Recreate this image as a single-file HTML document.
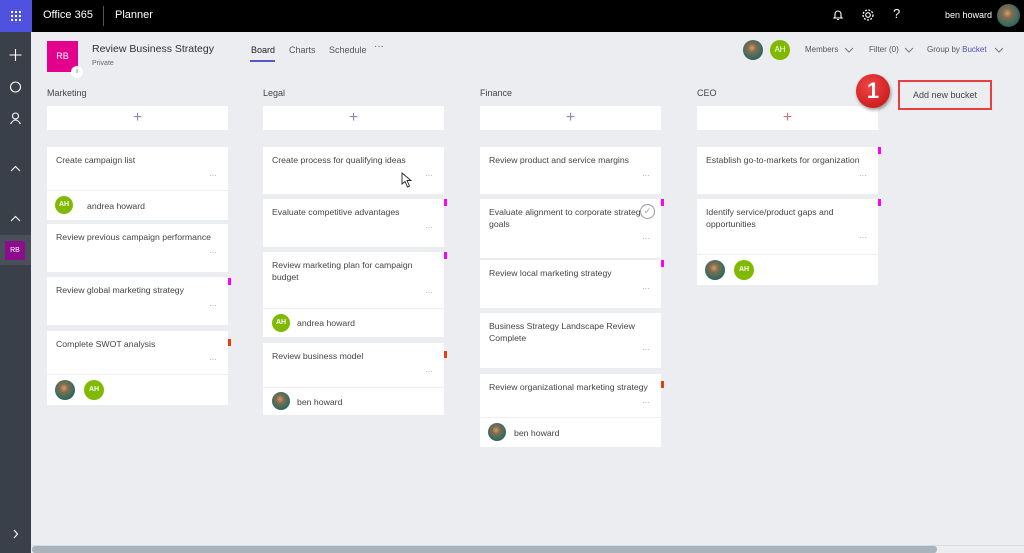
<!DOCTYPE html>
<html><head><meta charset="utf-8">
<style>
*{box-sizing:border-box;margin:0;padding:0}
body{width:1024px;height:553px;overflow:hidden;background:#ecedf1;font-family:"Segoe UI","Liberation Sans",sans-serif;color:#333;position:relative}
.abs{position:absolute}
.top{left:0;top:0;width:1024px;height:32px;background:#000;color:#fff}
.waffle{left:0;top:0;width:32px;height:32px;background:#4f52e0}
.side{left:0;top:32px;width:31px;height:521px;background:#3a4049}
.card{position:absolute;background:#fff;width:181px}
.t{position:absolute;left:9px;top:7px;font-size:8.7px;color:#444;line-height:12px;width:165px}
.dots{position:absolute;right:11px;font-size:8px;color:#999}
.div{position:absolute;left:0;width:181px;height:1px;background:#eee}
.ah{position:absolute;width:18px;height:18px;border-radius:50%;background:#7fba00;color:#fff;font-size:7px;text-align:center;line-height:18px;font-weight:bold}
.ph{position:absolute;width:20px;height:20px;border-radius:50%;background:radial-gradient(circle at 45% 40%,#c9a27a 0,#8a6a4a 25%,#3f6d62 55%,#2c4a44 100%)}
.nm{position:absolute;font-size:8.7px;color:#444}
.tag{position:absolute;width:3px;height:7px}
.mag{background:#ff00ff}.org{background:#e8400c}
.add{position:absolute;background:#fff;width:181px;height:24px;top:106px;text-align:center;font-size:16px;color:#8b8bb4;line-height:24px;font-weight:300}
.hd{position:absolute;top:88px;font-size:9px;color:#444}
</style></head><body>
<div class="abs top"></div>
<div class="abs waffle"><svg width="32" height="32"><g fill="#fff">
<rect x="11" y="11" width="2" height="2"/><rect x="15" y="11" width="2" height="2"/><rect x="19" y="11" width="2" height="2"/>
<rect x="11" y="15" width="2" height="2"/><rect x="15" y="15" width="2" height="2"/><rect x="19" y="15" width="2" height="2"/>
<rect x="11" y="19" width="2" height="2"/><rect x="15" y="19" width="2" height="2"/><rect x="19" y="19" width="2" height="2"/></g></svg></div>
<div class="abs" style="left:43px;top:9px;color:#fff;font-size:11px">Office 365</div>
<div class="abs" style="left:103px;top:6px;width:1px;height:20px;background:#555"></div>
<div class="abs" style="left:115px;top:9px;color:#fff;font-size:11px">Planner</div>
<svg class="abs" style="left:831px;top:8px" width="14" height="14"><path d="M3 10 L4 9 V6 A3 3 0 0 1 10 6 V9 L11 10 Z M6 11.5 H8" stroke="#fff" fill="none" stroke-width="1.1"/></svg>
<svg class="abs" style="left:860px;top:7px" width="16" height="16"><circle cx="8" cy="8" r="2.3" stroke="#fff" fill="none" stroke-width="1.1"/><circle cx="8" cy="8" r="5" stroke="#fff" fill="none" stroke-width="1.3" stroke-dasharray="2 1.4"/></svg>
<div class="abs" style="left:893px;top:6px;color:#fff;font-size:13px">?</div>
<div class="abs" style="left:945px;top:10px;color:#fff;font-size:9px">ben howard</div>
<div class="ph" style="left:997px;top:4px;width:23px;height:23px"></div>

<div class="abs side"></div>
<div class="abs" style="left:0;top:235px;width:31px;height:30px;background:#4a5059"></div>
<div class="abs" style="left:5px;top:241px;width:20px;height:19px;background:#8c0d8c;color:#fff;font-size:7px;text-align:center;line-height:19px">RB</div>
<svg class="abs" style="left:0;top:32px" width="31" height="521"><g stroke="#fff" fill="none" stroke-width="1.1">
<path d="M15.5 17 V29 M9.5 23 H21.5"/><circle cx="15.5" cy="55" r="5"/>
<circle cx="15.5" cy="84" r="3"/><path d="M10.5 92 Q15.5 84 20.5 92"/>
<path d="M11 139 L15.5 134.5 L20 139"/><path d="M11 189 L15.5 184.5 L20 189"/>
<path d="M14 498 L17.5 502 L14 506"/></g></svg>

<div class="abs" style="left:47px;top:41px;width:31px;height:31px;background:#e3008c;color:#fff;font-size:9px;text-align:center;line-height:31px">RB</div>
<div class="abs" style="left:71px;top:66px;width:12px;height:12px;border-radius:50%;background:#fff;font-size:7px;text-align:center;line-height:12px;color:#666">i</div>
<div class="abs" style="left:92px;top:43px;font-size:10.5px;color:#333">Review Business Strategy</div>
<div class="abs" style="left:92px;top:60px;font-size:7px;color:#666">Private</div>
<div class="abs" style="left:251px;top:45px;font-size:9px;color:#222">Board</div>
<div class="abs" style="left:250px;top:60px;width:25px;height:2px;background:#5558c8"></div>
<div class="abs" style="left:289px;top:45px;font-size:9px;color:#555">Charts</div>
<div class="abs" style="left:329px;top:45px;font-size:9px;color:#555">Schedule</div>
<div class="abs" style="left:374px;top:41px;font-size:10px;color:#555">···</div>

<div class="ph" style="left:743px;top:40px"></div>
<div class="ah" style="left:770px;top:40px;width:20px;height:20px;line-height:20px;font-size:8px;font-weight:normal">AH</div>
<div class="abs" style="left:805px;top:45px;font-size:8px;color:#555">Members</div>
<div class="abs" style="left:869px;top:45px;font-size:8px;color:#555">Filter (0)</div>
<div class="abs" style="left:927px;top:45px;font-size:8px;color:#555">Group by <span style="color:#4f52b2">Bucket</span></div>
<svg class="abs" style="left:840px;top:44px" width="180" height="12"><g stroke="#777" fill="none"><path d="M5 4 L9 8 L13 4"/><path d="M65 4 L69 8 L73 4"/><path d="M155 4 L159 8 L163 4"/></g></svg>

<div class="hd" style="left:47px">Marketing</div>
<div class="hd" style="left:263px">Legal</div>
<div class="hd" style="left:480px">Finance</div>
<div class="hd" style="left:697px">CEO</div>
<div class="add" style="left:47px">+</div>
<div class="add" style="left:263px">+</div>
<div class="add" style="left:480px">+</div>
<div class="add" style="left:697px;color:#c77">+</div>

<div class="abs" style="left:856px;top:74px;width:34px;height:34px;border-radius:50%;background:radial-gradient(circle at 40% 35%,#f04545,#c01010);box-shadow:1px 2px 3px rgba(0,0,0,.4);color:#fff;font-size:22px;font-weight:bold;text-align:center;line-height:34px;font-family:'Liberation Sans',sans-serif">1</div>
<div class="abs" style="left:898px;top:80px;width:94px;height:30px;border:2px solid #e84040;font-size:9px;color:#444;text-align:center;line-height:26px">Add new bucket</div>

<!-- Marketing -->
<div class="card" style="left:47px;top:147px;height:73px"><div class="t">Create campaign list</div><div class="dots" style="top:24px">···</div><div class="div" style="top:43px"></div><div class="ah" style="left:8px;top:49px">AH</div><div class="nm" style="left:40px;top:54px">andrea howard</div></div>
<div class="card" style="left:47px;top:224px;height:48px"><div class="t">Review previous campaign performance</div><div class="dots" style="top:24px">···</div></div>
<div class="card" style="left:47px;top:277px;height:48px"><div class="t">Review global marketing strategy</div><div class="dots" style="top:24px">···</div></div>
<div class="tag mag" style="left:228px;top:278px"></div>
<div class="card" style="left:47px;top:331px;height:74px"><div class="t">Complete SWOT analysis</div><div class="dots" style="top:24px">···</div><div class="div" style="top:43px"></div><div class="ph" style="left:8px;top:49px"></div><div class="ah" style="left:37px;top:49px;width:20px;height:20px;line-height:20px">AH</div></div>
<div class="tag org" style="left:228px;top:339px"></div>

<!-- Legal -->
<div class="card" style="left:263px;top:147px;height:47px"><div class="t">Create process for qualifying ideas</div><div class="dots" style="top:24px">···</div></div>
<svg class="abs" style="left:401px;top:172px" width="14" height="17"><path d="M1 1 L1 12 L4 9.5 L6.5 15 L8.5 14 L6 8.5 L10 8.5 Z" fill="#fff" stroke="#222" stroke-width="0.9"/></svg>
<div class="card" style="left:263px;top:199px;height:48px"><div class="t">Evaluate competitive advantages</div><div class="dots" style="top:24px">···</div></div>
<div class="tag mag" style="left:444px;top:199px"></div>
<div class="card" style="left:263px;top:252px;height:85px"><div class="t">Review marketing plan for campaign budget</div><div class="dots" style="top:36px">···</div><div class="div" style="top:56px"></div><div class="ah" style="left:9px;top:62px">AH</div><div class="nm" style="left:34px;top:66px">andrea howard</div></div>
<div class="tag mag" style="left:444px;top:252px"></div>
<div class="card" style="left:263px;top:343px;height:72px"><div class="t">Review business model</div><div class="dots" style="top:24px">···</div><div class="div" style="top:44px"></div><div class="ph" style="left:9px;top:49px;width:18px;height:18px"></div><div class="nm" style="left:34px;top:54px">ben howard</div></div>
<div class="tag org" style="left:444px;top:351px"></div>

<!-- Finance -->
<div class="card" style="left:480px;top:147px;height:47px"><div class="t">Review product and service margins</div><div class="dots" style="top:24px">···</div></div>
<div class="card" style="left:480px;top:199px;height:59px"><div class="t" style="width:160px;white-space:nowrap;overflow:hidden">Evaluate alignment to corporate strateg<br>goals</div><div style="position:absolute;left:160px;top:5px;width:15px;height:15px;border-radius:50%;border:1px solid #999;background:#fff;font-size:9px;color:#999;text-align:center;line-height:13px">✓</div><div class="dots" style="top:35px">···</div></div>
<div class="tag mag" style="left:661px;top:199px"></div>
<div class="card" style="left:480px;top:260px;height:48px"><div class="t">Review local marketing strategy</div><div class="dots" style="top:24px">···</div></div>
<div class="tag mag" style="left:661px;top:260px"></div>
<div class="card" style="left:480px;top:313px;height:55px"><div class="t">Business Strategy Landscape Review Complete</div><div class="dots" style="top:32px">···</div></div>
<div class="card" style="left:480px;top:374px;height:73px"><div class="t">Review organizational marketing strategy</div><div class="dots" style="top:24px">···</div><div class="div" style="top:43px"></div><div class="ph" style="left:8px;top:49px;width:18px;height:18px"></div><div class="nm" style="left:34px;top:54px">ben howard</div></div>
<div class="tag org" style="left:661px;top:381px"></div>

<!-- CEO -->
<div class="card" style="left:697px;top:147px;height:47px"><div class="t">Establish go-to-markets for organization</div><div class="dots" style="top:24px">···</div></div>
<div class="tag mag" style="left:878px;top:147px"></div>
<div class="card" style="left:697px;top:199px;height:86px"><div class="t">Identify service/product gaps and opportunities</div><div class="dots" style="top:34px">···</div><div class="div" style="top:55px"></div><div class="ph" style="left:8px;top:61px"></div><div class="ah" style="left:37px;top:61px;width:20px;height:20px;line-height:20px">AH</div></div>
<div class="tag mag" style="left:878px;top:199px"></div>

<div class="abs" style="left:31px;top:545px;width:993px;height:1px;background:#d8dbe0"></div>
<div class="abs" style="left:32px;top:546px;width:905px;height:7px;border-radius:3px;background:#aab2bb"></div>
</body></html>
